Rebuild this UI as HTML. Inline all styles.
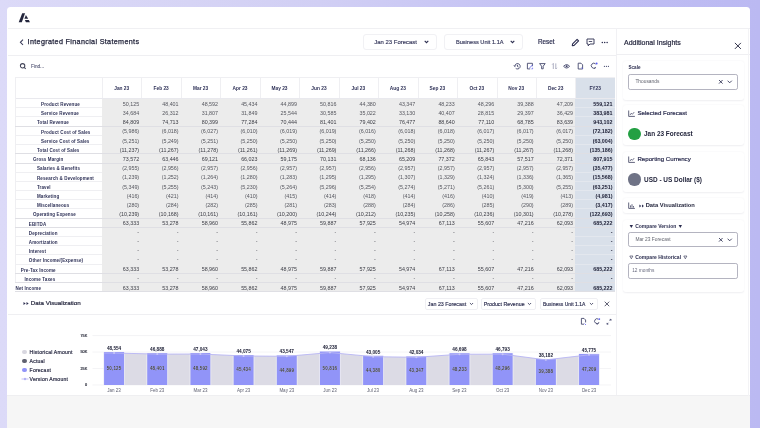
<!DOCTYPE html><html><head><meta charset="utf-8"><style>
*{box-sizing:border-box;margin:0;padding:0}
html,body{width:760px;height:428px;overflow:hidden}
body{font-family:"Liberation Sans",sans-serif;background:linear-gradient(90deg,#dcdaf8 0%,#d6d4f5 25%,#d1cff4 42%,#c7c5f4 63%,#c0bef3 79%,#bbb9f2 100%);position:relative;color:#2b2d4f}
.abs{position:absolute}
.wrap{position:absolute;left:0;top:0;width:760px;height:428px;will-change:transform}
.card{position:absolute;left:7.2px;top:6.8px;width:742.8px;height:440px;background:#fff;border-radius:3.5px;overflow:hidden}
.t{position:absolute;white-space:nowrap;line-height:1}
.hl{position:absolute;height:1px;background:#efeff2}
.vl{position:absolute;width:1px;background:#efeff2}
.lbl{position:absolute;white-space:nowrap;font-weight:bold;font-size:4.5px;letter-spacing:0.12px;color:#2e3157;line-height:1}
.num{position:absolute;white-space:nowrap;font-size:5.35px;color:#55565e;line-height:1;text-align:right}
.mh{position:absolute;white-space:nowrap;font-weight:bold;font-size:4.8px;color:#2e3157;line-height:1;text-align:center}
</style></head><body><div class="wrap"><div class="card"></div>
<svg class="abs" style="left:0;top:0" width="760" height="428"><g fill="#23253c"><polygon points="18.7,22.2 21.8,22.2 25.1,13.3 22.2,13.3"/><polygon points="25.9,15.0 28.2,18.8 24.4,18.8"/><polygon points="24.9,20.0 28.9,20.0 29.9,22.2 25.9,22.2"/></g></svg>
<div class="hl" style="left:8px;top:28px;width:742px;background:#f0f0f3"></div>
<svg class="abs" style="left:18.6px;top:39px" width="6" height="7"><polyline points="4,0.7 1.4,3.3 4,5.9" fill="none" stroke="#3a3c5a" stroke-width="1.05"/></svg>
<div class="t" style="left:27.6px;top:38.3px;font-size:7.2px;letter-spacing:0.33px;-webkit-text-stroke:0.25px #24263d;color:#24263d">Integrated Financial Statements</div>
<div class="abs" style="left:362.5px;top:34.2px;width:74.5px;height:15.5px;border:1px solid #f1f1f4;border-radius:3px"></div>
<div class="t" style="left:374.3px;top:39.775px;font-size:5.95px;color:#34365a;-webkit-text-stroke:0.15px #34365a">Jan 23 Forecast</div>
<svg class="abs" style="left:423.9px;top:40.35px" width="5" height="4"><polyline points="0.7,0.9 2.5,2.7 4.3,0.9" fill="none" stroke="#2b2d4f" stroke-width="1.1"/></svg>
<div class="abs" style="left:443.5px;top:34.2px;width:79.89999999999998px;height:15.5px;border:1px solid #f1f1f4;border-radius:3px"></div>
<div class="t" style="left:455.9px;top:39.925px;font-size:5.65px;color:#34365a;-webkit-text-stroke:0.15px #34365a">Business Unit 1.1A</div>
<svg class="abs" style="left:509.5px;top:40.35px" width="5" height="4"><polyline points="0.7,0.9 2.5,2.7 4.3,0.9" fill="none" stroke="#2b2d4f" stroke-width="1.1"/></svg>
<div class="t" style="left:538px;top:38.8px;font-size:6.35px;color:#2b2d4f;-webkit-text-stroke:0.2px #2b2d4f">Reset</div>
<svg class="abs" style="left:571px;top:38px" width="9" height="9"><path d="M1.3,7.7 L1.6,5.9 L6.1,1.4 L7.6,2.9 L3.1,7.4 Z" fill="none" stroke="#2b2d4f" stroke-width="1.1" stroke-linejoin="round"/></svg>
<svg class="abs" style="left:585.5px;top:38px" width="9" height="9"><path d="M1,1 H8 V6 H4 L2.2,7.8 V6 H1 Z" fill="none" stroke="#2b2d4f" stroke-width="0.9"/><line x1="2.8" y1="3.5" x2="6.2" y2="3.5" stroke="#2b2d4f" stroke-width="0.8"/></svg>
<svg class="abs" style="left:601px;top:40px" width="8" height="5"><g fill="#2b2d4f"><circle cx="1.3" cy="2.5" r="0.75"/><circle cx="3.7" cy="2.5" r="0.75"/><circle cx="6.1" cy="2.5" r="0.75"/></g></svg>
<div class="hl" style="left:8px;top:55px;width:608px"></div>
<svg class="abs" style="left:19px;top:62px" width="8" height="8"><circle cx="3.6" cy="3.8" r="2.2" fill="none" stroke="#44465a" stroke-width="1.05"/><line x1="5.2" y1="5.4" x2="6.7" y2="6.9" stroke="#44465a" stroke-width="1.05"/></svg>
<div class="t" style="left:31px;top:64.8px;font-size:4.7px;color:#5c5e7c;-webkit-text-stroke:0.12px #5c5e7c">Find...</div>
<svg class="abs" style="left:510px;top:60px" width="105" height="12"><g fill="none" stroke="#3b3e66" stroke-width="0.85">
<path d="M4.8,6.3 A2.7,2.7 0 1 1 5.7,8.3"/><path d="M3.9,5.4 L4.8,6.5 L5.8,5.5"/><path d="M7.5,4.9 V6.5 L8.6,7.1"/>
<path d="M17.4,3.3 H22.4 V6.2 M17.4,3.3 V8.9 H20.2"/><path d="M19.6,7.9 L22.6,4.9" stroke="#5a5cf0"/><path d="M21.4,8.9 H22.6 V7.7" stroke="#5a5cf0" stroke-width="0.7"/>
<path d="M29.6,3.6 H35.2 L33.2,6.2 V8.8 H31.6 V6.2 Z"/>
<path d="M43.3,3.4 V9 M42.2,4.6 L43.3,3.4 M45.8,3.4 V9 L46.9,7.8" stroke="#a0a2b8"/>
<path d="M53.6,6.3 Q56.6,2.9 59.6,6.3 Q56.6,9.7 53.6,6.3 Z"/><circle cx="56.6" cy="6.3" r="1" fill="#3b3e66" stroke="none"/>
<path d="M68.2,3.2 H71 L72.6,4.8 V9 H68.2 Z"/><path d="M71.5,7.6 L72.8,8.9" stroke="#5a5cf0"/>
<path d="M85.6,4.0 A2.5,2.5 0 1 0 85.6,7.4 L84.4,9.0"/><circle cx="86.6" cy="3.6" r="1.0" fill="#5a5cf0" stroke="none"/>
</g><g fill="#3b3e66"><circle cx="94.4" cy="6.3" r="0.6"/><circle cx="96.4" cy="6.3" r="0.6"/><circle cx="98.4" cy="6.3" r="0.6"/></g></svg>
<div class="abs" style="left:102.0px;top:98.4px;width:473.40000000000003px;height:193.2px;background:#ececec"></div>
<div class="abs" style="left:575.4000000000001px;top:77.4px;width:39.45px;height:214.2px;background:#d9e0ea"></div>
<div class="hl" style="left:15.0px;top:77.4px;width:599.85px"></div>
<div class="hl" style="left:15.0px;top:98.4px;width:599.85px;background:#e9e9ee"></div>
<div class="vl" style="left:15.0px;top:77.4px;height:205.00000000000003px"></div>
<div class="vl" style="left:102.0px;top:77.4px;height:21.0px"></div>
<div class="vl" style="left:141.45px;top:77.4px;height:21.0px"></div>
<div class="vl" style="left:180.90px;top:77.4px;height:21.0px"></div>
<div class="vl" style="left:220.35px;top:77.4px;height:21.0px"></div>
<div class="vl" style="left:259.80px;top:77.4px;height:21.0px"></div>
<div class="vl" style="left:299.25px;top:77.4px;height:21.0px"></div>
<div class="vl" style="left:338.70px;top:77.4px;height:21.0px"></div>
<div class="vl" style="left:378.15px;top:77.4px;height:21.0px"></div>
<div class="vl" style="left:417.60px;top:77.4px;height:21.0px"></div>
<div class="vl" style="left:457.05px;top:77.4px;height:21.0px"></div>
<div class="vl" style="left:496.50px;top:77.4px;height:21.0px"></div>
<div class="vl" style="left:535.95px;top:77.4px;height:21.0px"></div>
<div class="vl" style="left:575.40px;top:77.4px;height:21.0px"></div>
<div class="mh" style="left:102.00px;top:87.00px;width:39.45px">Jan 23</div>
<div class="mh" style="left:141.45px;top:87.00px;width:39.45px">Feb 23</div>
<div class="mh" style="left:180.90px;top:87.00px;width:39.45px">Mar 23</div>
<div class="mh" style="left:220.35px;top:87.00px;width:39.45px">Apr 23</div>
<div class="mh" style="left:259.80px;top:87.00px;width:39.45px">May 23</div>
<div class="mh" style="left:299.25px;top:87.00px;width:39.45px">Jun 23</div>
<div class="mh" style="left:338.70px;top:87.00px;width:39.45px">Jul 23</div>
<div class="mh" style="left:378.15px;top:87.00px;width:39.45px">Aug 23</div>
<div class="mh" style="left:417.60px;top:87.00px;width:39.45px">Sep 23</div>
<div class="mh" style="left:457.05px;top:87.00px;width:39.45px">Oct 23</div>
<div class="mh" style="left:496.50px;top:87.00px;width:39.45px">Nov 23</div>
<div class="mh" style="left:535.95px;top:87.00px;width:39.45px">Dec 23</div>
<div class="mh" style="left:575.40px;top:87.00px;width:39.45px">FY23</div>
<div class="hl" style="left:15.0px;top:107.10px;width:87.0px;background:#efeff2"></div>
<div class="hl" style="left:575.40px;top:107.10px;width:39.45px;background:#e3e7ee"></div>
<div class="lbl" style="left:41.1px;top:102.90px">Product Revenue</div>
<div class="num" style="left:102.00px;top:101.70px;width:37.150000000000006px;">50,125</div>
<div class="num" style="left:141.45px;top:101.70px;width:37.150000000000006px;">48,401</div>
<div class="num" style="left:180.90px;top:101.70px;width:37.150000000000006px;">48,592</div>
<div class="num" style="left:220.35px;top:101.70px;width:37.150000000000006px;">45,434</div>
<div class="num" style="left:259.80px;top:101.70px;width:37.150000000000006px;">44,899</div>
<div class="num" style="left:299.25px;top:101.70px;width:37.150000000000006px;">50,816</div>
<div class="num" style="left:338.70px;top:101.70px;width:37.150000000000006px;">44,380</div>
<div class="num" style="left:378.15px;top:101.70px;width:37.150000000000006px;">43,347</div>
<div class="num" style="left:417.60px;top:101.70px;width:37.150000000000006px;">48,233</div>
<div class="num" style="left:457.05px;top:101.70px;width:37.150000000000006px;">48,296</div>
<div class="num" style="left:496.50px;top:101.70px;width:37.150000000000006px;">39,388</div>
<div class="num" style="left:535.95px;top:101.70px;width:37.150000000000006px;">47,209</div>
<div class="num" style="left:575.40px;top:101.70px;width:37.150000000000006px;font-weight:bold;color:#22243a;">559,121</div>
<div class="hl" style="left:15.0px;top:116.30px;width:87.0px;background:#efeff2"></div>
<div class="hl" style="left:575.40px;top:116.30px;width:39.45px;background:#e3e7ee"></div>
<div class="lbl" style="left:41.1px;top:112.10px">Service Revenue</div>
<div class="num" style="left:102.00px;top:110.90px;width:37.150000000000006px;">34,684</div>
<div class="num" style="left:141.45px;top:110.90px;width:37.150000000000006px;">26,312</div>
<div class="num" style="left:180.90px;top:110.90px;width:37.150000000000006px;">31,807</div>
<div class="num" style="left:220.35px;top:110.90px;width:37.150000000000006px;">31,849</div>
<div class="num" style="left:259.80px;top:110.90px;width:37.150000000000006px;">25,544</div>
<div class="num" style="left:299.25px;top:110.90px;width:37.150000000000006px;">30,585</div>
<div class="num" style="left:338.70px;top:110.90px;width:37.150000000000006px;">35,022</div>
<div class="num" style="left:378.15px;top:110.90px;width:37.150000000000006px;">33,130</div>
<div class="num" style="left:417.60px;top:110.90px;width:37.150000000000006px;">40,407</div>
<div class="num" style="left:457.05px;top:110.90px;width:37.150000000000006px;">28,815</div>
<div class="num" style="left:496.50px;top:110.90px;width:37.150000000000006px;">29,397</div>
<div class="num" style="left:535.95px;top:110.90px;width:37.150000000000006px;">36,429</div>
<div class="num" style="left:575.40px;top:110.90px;width:37.150000000000006px;font-weight:bold;color:#22243a;">383,981</div>
<div class="hl" style="left:15.0px;top:125.80px;width:599.85px;background:#dfdfe4"></div>
<div class="lbl" style="left:37.0px;top:121.30px">Total Revenue</div>
<div class="num" style="left:102.00px;top:120.10px;width:37.150000000000006px;color:#3a3b44;">84,809</div>
<div class="num" style="left:141.45px;top:120.10px;width:37.150000000000006px;color:#3a3b44;">74,713</div>
<div class="num" style="left:180.90px;top:120.10px;width:37.150000000000006px;color:#3a3b44;">80,399</div>
<div class="num" style="left:220.35px;top:120.10px;width:37.150000000000006px;color:#3a3b44;">77,284</div>
<div class="num" style="left:259.80px;top:120.10px;width:37.150000000000006px;color:#3a3b44;">70,444</div>
<div class="num" style="left:299.25px;top:120.10px;width:37.150000000000006px;color:#3a3b44;">81,401</div>
<div class="num" style="left:338.70px;top:120.10px;width:37.150000000000006px;color:#3a3b44;">79,402</div>
<div class="num" style="left:378.15px;top:120.10px;width:37.150000000000006px;color:#3a3b44;">76,477</div>
<div class="num" style="left:417.60px;top:120.10px;width:37.150000000000006px;color:#3a3b44;">88,640</div>
<div class="num" style="left:457.05px;top:120.10px;width:37.150000000000006px;color:#3a3b44;">77,110</div>
<div class="num" style="left:496.50px;top:120.10px;width:37.150000000000006px;color:#3a3b44;">68,785</div>
<div class="num" style="left:535.95px;top:120.10px;width:37.150000000000006px;color:#3a3b44;">83,639</div>
<div class="num" style="left:575.40px;top:120.10px;width:37.150000000000006px;font-weight:bold;color:#22243a;">943,102</div>
<div class="hl" style="left:15.0px;top:134.70px;width:87.0px;background:#efeff2"></div>
<div class="hl" style="left:575.40px;top:134.70px;width:39.45px;background:#e3e7ee"></div>
<div class="lbl" style="left:41.1px;top:130.50px">Product Cost of Sales</div>
<div class="num" style="left:102.00px;top:129.30px;width:37.150000000000006px;">(5,986)</div>
<div class="num" style="left:141.45px;top:129.30px;width:37.150000000000006px;">(6,018)</div>
<div class="num" style="left:180.90px;top:129.30px;width:37.150000000000006px;">(6,027)</div>
<div class="num" style="left:220.35px;top:129.30px;width:37.150000000000006px;">(6,010)</div>
<div class="num" style="left:259.80px;top:129.30px;width:37.150000000000006px;">(6,019)</div>
<div class="num" style="left:299.25px;top:129.30px;width:37.150000000000006px;">(6,019)</div>
<div class="num" style="left:338.70px;top:129.30px;width:37.150000000000006px;">(6,016)</div>
<div class="num" style="left:378.15px;top:129.30px;width:37.150000000000006px;">(6,018)</div>
<div class="num" style="left:417.60px;top:129.30px;width:37.150000000000006px;">(6,018)</div>
<div class="num" style="left:457.05px;top:129.30px;width:37.150000000000006px;">(6,017)</div>
<div class="num" style="left:496.50px;top:129.30px;width:37.150000000000006px;">(6,017)</div>
<div class="num" style="left:535.95px;top:129.30px;width:37.150000000000006px;">(6,017)</div>
<div class="num" style="left:575.40px;top:129.30px;width:37.150000000000006px;font-weight:bold;color:#22243a;">(72,182)</div>
<div class="hl" style="left:15.0px;top:143.90px;width:87.0px;background:#efeff2"></div>
<div class="hl" style="left:575.40px;top:143.90px;width:39.45px;background:#e3e7ee"></div>
<div class="lbl" style="left:41.1px;top:139.70px">Service Cost of Sales</div>
<div class="num" style="left:102.00px;top:138.50px;width:37.150000000000006px;">(5,251)</div>
<div class="num" style="left:141.45px;top:138.50px;width:37.150000000000006px;">(5,249)</div>
<div class="num" style="left:180.90px;top:138.50px;width:37.150000000000006px;">(5,251)</div>
<div class="num" style="left:220.35px;top:138.50px;width:37.150000000000006px;">(5,250)</div>
<div class="num" style="left:259.80px;top:138.50px;width:37.150000000000006px;">(5,250)</div>
<div class="num" style="left:299.25px;top:138.50px;width:37.150000000000006px;">(5,250)</div>
<div class="num" style="left:338.70px;top:138.50px;width:37.150000000000006px;">(5,250)</div>
<div class="num" style="left:378.15px;top:138.50px;width:37.150000000000006px;">(5,250)</div>
<div class="num" style="left:417.60px;top:138.50px;width:37.150000000000006px;">(5,250)</div>
<div class="num" style="left:457.05px;top:138.50px;width:37.150000000000006px;">(5,250)</div>
<div class="num" style="left:496.50px;top:138.50px;width:37.150000000000006px;">(5,250)</div>
<div class="num" style="left:535.95px;top:138.50px;width:37.150000000000006px;">(5,250)</div>
<div class="num" style="left:575.40px;top:138.50px;width:37.150000000000006px;font-weight:bold;color:#22243a;">(63,004)</div>
<div class="hl" style="left:15.0px;top:153.40px;width:599.85px;background:#dfdfe4"></div>
<div class="lbl" style="left:37.0px;top:148.90px">Total Cost of Sales</div>
<div class="num" style="left:102.00px;top:147.70px;width:37.150000000000006px;color:#3a3b44;">(11,237)</div>
<div class="num" style="left:141.45px;top:147.70px;width:37.150000000000006px;color:#3a3b44;">(11,267)</div>
<div class="num" style="left:180.90px;top:147.70px;width:37.150000000000006px;color:#3a3b44;">(11,278)</div>
<div class="num" style="left:220.35px;top:147.70px;width:37.150000000000006px;color:#3a3b44;">(11,261)</div>
<div class="num" style="left:259.80px;top:147.70px;width:37.150000000000006px;color:#3a3b44;">(11,269)</div>
<div class="num" style="left:299.25px;top:147.70px;width:37.150000000000006px;color:#3a3b44;">(11,269)</div>
<div class="num" style="left:338.70px;top:147.70px;width:37.150000000000006px;color:#3a3b44;">(11,266)</div>
<div class="num" style="left:378.15px;top:147.70px;width:37.150000000000006px;color:#3a3b44;">(11,268)</div>
<div class="num" style="left:417.60px;top:147.70px;width:37.150000000000006px;color:#3a3b44;">(11,268)</div>
<div class="num" style="left:457.05px;top:147.70px;width:37.150000000000006px;color:#3a3b44;">(11,267)</div>
<div class="num" style="left:496.50px;top:147.70px;width:37.150000000000006px;color:#3a3b44;">(11,267)</div>
<div class="num" style="left:535.95px;top:147.70px;width:37.150000000000006px;color:#3a3b44;">(11,268)</div>
<div class="num" style="left:575.40px;top:147.70px;width:37.150000000000006px;font-weight:bold;color:#22243a;">(135,186)</div>
<div class="hl" style="left:15.0px;top:162.60px;width:599.85px;background:#dfdfe4"></div>
<div class="lbl" style="left:32.9px;top:158.10px">Gross Margin</div>
<div class="num" style="left:102.00px;top:156.90px;width:37.150000000000006px;color:#3a3b44;">73,572</div>
<div class="num" style="left:141.45px;top:156.90px;width:37.150000000000006px;color:#3a3b44;">63,446</div>
<div class="num" style="left:180.90px;top:156.90px;width:37.150000000000006px;color:#3a3b44;">69,121</div>
<div class="num" style="left:220.35px;top:156.90px;width:37.150000000000006px;color:#3a3b44;">66,023</div>
<div class="num" style="left:259.80px;top:156.90px;width:37.150000000000006px;color:#3a3b44;">59,175</div>
<div class="num" style="left:299.25px;top:156.90px;width:37.150000000000006px;color:#3a3b44;">70,131</div>
<div class="num" style="left:338.70px;top:156.90px;width:37.150000000000006px;color:#3a3b44;">68,136</div>
<div class="num" style="left:378.15px;top:156.90px;width:37.150000000000006px;color:#3a3b44;">65,209</div>
<div class="num" style="left:417.60px;top:156.90px;width:37.150000000000006px;color:#3a3b44;">77,372</div>
<div class="num" style="left:457.05px;top:156.90px;width:37.150000000000006px;color:#3a3b44;">65,843</div>
<div class="num" style="left:496.50px;top:156.90px;width:37.150000000000006px;color:#3a3b44;">57,517</div>
<div class="num" style="left:535.95px;top:156.90px;width:37.150000000000006px;color:#3a3b44;">72,371</div>
<div class="num" style="left:575.40px;top:156.90px;width:37.150000000000006px;font-weight:bold;color:#22243a;">807,915</div>
<div class="hl" style="left:15.0px;top:171.50px;width:87.0px;background:#efeff2"></div>
<div class="hl" style="left:575.40px;top:171.50px;width:39.45px;background:#e3e7ee"></div>
<div class="lbl" style="left:37.0px;top:167.30px">Salaries &amp; Benefits</div>
<div class="num" style="left:102.00px;top:166.10px;width:37.150000000000006px;">(2,955)</div>
<div class="num" style="left:141.45px;top:166.10px;width:37.150000000000006px;">(2,956)</div>
<div class="num" style="left:180.90px;top:166.10px;width:37.150000000000006px;">(2,957)</div>
<div class="num" style="left:220.35px;top:166.10px;width:37.150000000000006px;">(2,956)</div>
<div class="num" style="left:259.80px;top:166.10px;width:37.150000000000006px;">(2,957)</div>
<div class="num" style="left:299.25px;top:166.10px;width:37.150000000000006px;">(2,957)</div>
<div class="num" style="left:338.70px;top:166.10px;width:37.150000000000006px;">(2,956)</div>
<div class="num" style="left:378.15px;top:166.10px;width:37.150000000000006px;">(2,957)</div>
<div class="num" style="left:417.60px;top:166.10px;width:37.150000000000006px;">(2,957)</div>
<div class="num" style="left:457.05px;top:166.10px;width:37.150000000000006px;">(2,957)</div>
<div class="num" style="left:496.50px;top:166.10px;width:37.150000000000006px;">(2,957)</div>
<div class="num" style="left:535.95px;top:166.10px;width:37.150000000000006px;">(2,957)</div>
<div class="num" style="left:575.40px;top:166.10px;width:37.150000000000006px;font-weight:bold;color:#22243a;">(35,477)</div>
<div class="hl" style="left:15.0px;top:180.70px;width:87.0px;background:#efeff2"></div>
<div class="hl" style="left:575.40px;top:180.70px;width:39.45px;background:#e3e7ee"></div>
<div class="lbl" style="left:37.0px;top:176.50px">Research &amp; Development</div>
<div class="num" style="left:102.00px;top:175.30px;width:37.150000000000006px;">(1,239)</div>
<div class="num" style="left:141.45px;top:175.30px;width:37.150000000000006px;">(1,252)</div>
<div class="num" style="left:180.90px;top:175.30px;width:37.150000000000006px;">(1,264)</div>
<div class="num" style="left:220.35px;top:175.30px;width:37.150000000000006px;">(1,280)</div>
<div class="num" style="left:259.80px;top:175.30px;width:37.150000000000006px;">(1,283)</div>
<div class="num" style="left:299.25px;top:175.30px;width:37.150000000000006px;">(1,295)</div>
<div class="num" style="left:338.70px;top:175.30px;width:37.150000000000006px;">(1,295)</div>
<div class="num" style="left:378.15px;top:175.30px;width:37.150000000000006px;">(1,307)</div>
<div class="num" style="left:417.60px;top:175.30px;width:37.150000000000006px;">(1,329)</div>
<div class="num" style="left:457.05px;top:175.30px;width:37.150000000000006px;">(1,324)</div>
<div class="num" style="left:496.50px;top:175.30px;width:37.150000000000006px;">(1,336)</div>
<div class="num" style="left:535.95px;top:175.30px;width:37.150000000000006px;">(1,365)</div>
<div class="num" style="left:575.40px;top:175.30px;width:37.150000000000006px;font-weight:bold;color:#22243a;">(15,568)</div>
<div class="hl" style="left:15.0px;top:189.90px;width:87.0px;background:#efeff2"></div>
<div class="hl" style="left:575.40px;top:189.90px;width:39.45px;background:#e3e7ee"></div>
<div class="lbl" style="left:37.0px;top:185.70px">Travel</div>
<div class="num" style="left:102.00px;top:184.50px;width:37.150000000000006px;">(5,349)</div>
<div class="num" style="left:141.45px;top:184.50px;width:37.150000000000006px;">(5,255)</div>
<div class="num" style="left:180.90px;top:184.50px;width:37.150000000000006px;">(5,243)</div>
<div class="num" style="left:220.35px;top:184.50px;width:37.150000000000006px;">(5,230)</div>
<div class="num" style="left:259.80px;top:184.50px;width:37.150000000000006px;">(5,264)</div>
<div class="num" style="left:299.25px;top:184.50px;width:37.150000000000006px;">(5,296)</div>
<div class="num" style="left:338.70px;top:184.50px;width:37.150000000000006px;">(5,254)</div>
<div class="num" style="left:378.15px;top:184.50px;width:37.150000000000006px;">(5,274)</div>
<div class="num" style="left:417.60px;top:184.50px;width:37.150000000000006px;">(5,271)</div>
<div class="num" style="left:457.05px;top:184.50px;width:37.150000000000006px;">(5,261)</div>
<div class="num" style="left:496.50px;top:184.50px;width:37.150000000000006px;">(5,300)</div>
<div class="num" style="left:535.95px;top:184.50px;width:37.150000000000006px;">(5,255)</div>
<div class="num" style="left:575.40px;top:184.50px;width:37.150000000000006px;font-weight:bold;color:#22243a;">(63,251)</div>
<div class="hl" style="left:15.0px;top:199.10px;width:87.0px;background:#efeff2"></div>
<div class="hl" style="left:575.40px;top:199.10px;width:39.45px;background:#e3e7ee"></div>
<div class="lbl" style="left:37.0px;top:194.90px">Marketing</div>
<div class="num" style="left:102.00px;top:193.70px;width:37.150000000000006px;">(416)</div>
<div class="num" style="left:141.45px;top:193.70px;width:37.150000000000006px;">(421)</div>
<div class="num" style="left:180.90px;top:193.70px;width:37.150000000000006px;">(414)</div>
<div class="num" style="left:220.35px;top:193.70px;width:37.150000000000006px;">(410)</div>
<div class="num" style="left:259.80px;top:193.70px;width:37.150000000000006px;">(415)</div>
<div class="num" style="left:299.25px;top:193.70px;width:37.150000000000006px;">(414)</div>
<div class="num" style="left:338.70px;top:193.70px;width:37.150000000000006px;">(418)</div>
<div class="num" style="left:378.15px;top:193.70px;width:37.150000000000006px;">(414)</div>
<div class="num" style="left:417.60px;top:193.70px;width:37.150000000000006px;">(416)</div>
<div class="num" style="left:457.05px;top:193.70px;width:37.150000000000006px;">(410)</div>
<div class="num" style="left:496.50px;top:193.70px;width:37.150000000000006px;">(419)</div>
<div class="num" style="left:535.95px;top:193.70px;width:37.150000000000006px;">(413)</div>
<div class="num" style="left:575.40px;top:193.70px;width:37.150000000000006px;font-weight:bold;color:#22243a;">(4,981)</div>
<div class="hl" style="left:15.0px;top:208.30px;width:87.0px;background:#efeff2"></div>
<div class="hl" style="left:575.40px;top:208.30px;width:39.45px;background:#e3e7ee"></div>
<div class="lbl" style="left:37.0px;top:204.10px">Miscellaneous</div>
<div class="num" style="left:102.00px;top:202.90px;width:37.150000000000006px;">(280)</div>
<div class="num" style="left:141.45px;top:202.90px;width:37.150000000000006px;">(284)</div>
<div class="num" style="left:180.90px;top:202.90px;width:37.150000000000006px;">(282)</div>
<div class="num" style="left:220.35px;top:202.90px;width:37.150000000000006px;">(285)</div>
<div class="num" style="left:259.80px;top:202.90px;width:37.150000000000006px;">(281)</div>
<div class="num" style="left:299.25px;top:202.90px;width:37.150000000000006px;">(283)</div>
<div class="num" style="left:338.70px;top:202.90px;width:37.150000000000006px;">(288)</div>
<div class="num" style="left:378.15px;top:202.90px;width:37.150000000000006px;">(284)</div>
<div class="num" style="left:417.60px;top:202.90px;width:37.150000000000006px;">(286)</div>
<div class="num" style="left:457.05px;top:202.90px;width:37.150000000000006px;">(285)</div>
<div class="num" style="left:496.50px;top:202.90px;width:37.150000000000006px;">(290)</div>
<div class="num" style="left:535.95px;top:202.90px;width:37.150000000000006px;">(289)</div>
<div class="num" style="left:575.40px;top:202.90px;width:37.150000000000006px;font-weight:bold;color:#22243a;">(3,417)</div>
<div class="hl" style="left:15.0px;top:217.80px;width:599.85px;background:#dfdfe4"></div>
<div class="lbl" style="left:32.9px;top:213.30px">Operating Expense</div>
<div class="num" style="left:102.00px;top:212.10px;width:37.150000000000006px;color:#3a3b44;">(10,239)</div>
<div class="num" style="left:141.45px;top:212.10px;width:37.150000000000006px;color:#3a3b44;">(10,168)</div>
<div class="num" style="left:180.90px;top:212.10px;width:37.150000000000006px;color:#3a3b44;">(10,161)</div>
<div class="num" style="left:220.35px;top:212.10px;width:37.150000000000006px;color:#3a3b44;">(10,161)</div>
<div class="num" style="left:259.80px;top:212.10px;width:37.150000000000006px;color:#3a3b44;">(10,200)</div>
<div class="num" style="left:299.25px;top:212.10px;width:37.150000000000006px;color:#3a3b44;">(10,244)</div>
<div class="num" style="left:338.70px;top:212.10px;width:37.150000000000006px;color:#3a3b44;">(10,212)</div>
<div class="num" style="left:378.15px;top:212.10px;width:37.150000000000006px;color:#3a3b44;">(10,235)</div>
<div class="num" style="left:417.60px;top:212.10px;width:37.150000000000006px;color:#3a3b44;">(10,258)</div>
<div class="num" style="left:457.05px;top:212.10px;width:37.150000000000006px;color:#3a3b44;">(10,236)</div>
<div class="num" style="left:496.50px;top:212.10px;width:37.150000000000006px;color:#3a3b44;">(10,301)</div>
<div class="num" style="left:535.95px;top:212.10px;width:37.150000000000006px;color:#3a3b44;">(10,278)</div>
<div class="num" style="left:575.40px;top:212.10px;width:37.150000000000006px;font-weight:bold;color:#22243a;">(122,693)</div>
<div class="hl" style="left:15.0px;top:227.00px;width:599.85px;background:#dfdfe4"></div>
<div class="lbl" style="left:28.8px;top:222.50px">EBITDA</div>
<div class="num" style="left:102.00px;top:221.30px;width:37.150000000000006px;color:#3a3b44;">63,333</div>
<div class="num" style="left:141.45px;top:221.30px;width:37.150000000000006px;color:#3a3b44;">53,278</div>
<div class="num" style="left:180.90px;top:221.30px;width:37.150000000000006px;color:#3a3b44;">58,960</div>
<div class="num" style="left:220.35px;top:221.30px;width:37.150000000000006px;color:#3a3b44;">55,862</div>
<div class="num" style="left:259.80px;top:221.30px;width:37.150000000000006px;color:#3a3b44;">48,975</div>
<div class="num" style="left:299.25px;top:221.30px;width:37.150000000000006px;color:#3a3b44;">59,887</div>
<div class="num" style="left:338.70px;top:221.30px;width:37.150000000000006px;color:#3a3b44;">57,925</div>
<div class="num" style="left:378.15px;top:221.30px;width:37.150000000000006px;color:#3a3b44;">54,974</div>
<div class="num" style="left:417.60px;top:221.30px;width:37.150000000000006px;color:#3a3b44;">67,113</div>
<div class="num" style="left:457.05px;top:221.30px;width:37.150000000000006px;color:#3a3b44;">55,607</div>
<div class="num" style="left:496.50px;top:221.30px;width:37.150000000000006px;color:#3a3b44;">47,216</div>
<div class="num" style="left:535.95px;top:221.30px;width:37.150000000000006px;color:#3a3b44;">62,093</div>
<div class="num" style="left:575.40px;top:221.30px;width:37.150000000000006px;font-weight:bold;color:#22243a;">685,222</div>
<div class="hl" style="left:15.0px;top:235.90px;width:87.0px;background:#efeff2"></div>
<div class="hl" style="left:575.40px;top:235.90px;width:39.45px;background:#e3e7ee"></div>
<div class="lbl" style="left:28.8px;top:231.70px">Depreciation</div>
<div class="num" style="left:102.00px;top:229.60px;width:37.150000000000006px;">-</div>
<div class="num" style="left:141.45px;top:229.60px;width:37.150000000000006px;">-</div>
<div class="num" style="left:180.90px;top:229.60px;width:37.150000000000006px;">-</div>
<div class="num" style="left:220.35px;top:229.60px;width:37.150000000000006px;">-</div>
<div class="num" style="left:259.80px;top:229.60px;width:37.150000000000006px;">-</div>
<div class="num" style="left:299.25px;top:229.60px;width:37.150000000000006px;">-</div>
<div class="num" style="left:338.70px;top:229.60px;width:37.150000000000006px;">-</div>
<div class="num" style="left:378.15px;top:229.60px;width:37.150000000000006px;">-</div>
<div class="num" style="left:417.60px;top:229.60px;width:37.150000000000006px;">-</div>
<div class="num" style="left:457.05px;top:229.60px;width:37.150000000000006px;">-</div>
<div class="num" style="left:496.50px;top:229.60px;width:37.150000000000006px;">-</div>
<div class="num" style="left:535.95px;top:229.60px;width:37.150000000000006px;">-</div>
<div class="num" style="left:575.40px;top:229.60px;width:37.150000000000006px;font-weight:bold;color:#22243a;">-</div>
<div class="hl" style="left:15.0px;top:245.10px;width:87.0px;background:#efeff2"></div>
<div class="hl" style="left:575.40px;top:245.10px;width:39.45px;background:#e3e7ee"></div>
<div class="lbl" style="left:28.8px;top:240.90px">Amortization</div>
<div class="num" style="left:102.00px;top:238.80px;width:37.150000000000006px;">-</div>
<div class="num" style="left:141.45px;top:238.80px;width:37.150000000000006px;">-</div>
<div class="num" style="left:180.90px;top:238.80px;width:37.150000000000006px;">-</div>
<div class="num" style="left:220.35px;top:238.80px;width:37.150000000000006px;">-</div>
<div class="num" style="left:259.80px;top:238.80px;width:37.150000000000006px;">-</div>
<div class="num" style="left:299.25px;top:238.80px;width:37.150000000000006px;">-</div>
<div class="num" style="left:338.70px;top:238.80px;width:37.150000000000006px;">-</div>
<div class="num" style="left:378.15px;top:238.80px;width:37.150000000000006px;">-</div>
<div class="num" style="left:417.60px;top:238.80px;width:37.150000000000006px;">-</div>
<div class="num" style="left:457.05px;top:238.80px;width:37.150000000000006px;">-</div>
<div class="num" style="left:496.50px;top:238.80px;width:37.150000000000006px;">-</div>
<div class="num" style="left:535.95px;top:238.80px;width:37.150000000000006px;">-</div>
<div class="num" style="left:575.40px;top:238.80px;width:37.150000000000006px;font-weight:bold;color:#22243a;">-</div>
<div class="hl" style="left:15.0px;top:254.30px;width:87.0px;background:#efeff2"></div>
<div class="hl" style="left:575.40px;top:254.30px;width:39.45px;background:#e3e7ee"></div>
<div class="lbl" style="left:28.8px;top:250.10px">Interest</div>
<div class="num" style="left:102.00px;top:248.00px;width:37.150000000000006px;">-</div>
<div class="num" style="left:141.45px;top:248.00px;width:37.150000000000006px;">-</div>
<div class="num" style="left:180.90px;top:248.00px;width:37.150000000000006px;">-</div>
<div class="num" style="left:220.35px;top:248.00px;width:37.150000000000006px;">-</div>
<div class="num" style="left:259.80px;top:248.00px;width:37.150000000000006px;">-</div>
<div class="num" style="left:299.25px;top:248.00px;width:37.150000000000006px;">-</div>
<div class="num" style="left:338.70px;top:248.00px;width:37.150000000000006px;">-</div>
<div class="num" style="left:378.15px;top:248.00px;width:37.150000000000006px;">-</div>
<div class="num" style="left:417.60px;top:248.00px;width:37.150000000000006px;">-</div>
<div class="num" style="left:457.05px;top:248.00px;width:37.150000000000006px;">-</div>
<div class="num" style="left:496.50px;top:248.00px;width:37.150000000000006px;">-</div>
<div class="num" style="left:535.95px;top:248.00px;width:37.150000000000006px;">-</div>
<div class="num" style="left:575.40px;top:248.00px;width:37.150000000000006px;font-weight:bold;color:#22243a;">-</div>
<div class="hl" style="left:15.0px;top:263.50px;width:87.0px;background:#efeff2"></div>
<div class="hl" style="left:575.40px;top:263.50px;width:39.45px;background:#e3e7ee"></div>
<div class="lbl" style="left:28.8px;top:259.30px">Other Income/(Expense)</div>
<div class="num" style="left:102.00px;top:257.20px;width:37.150000000000006px;">-</div>
<div class="num" style="left:141.45px;top:257.20px;width:37.150000000000006px;">-</div>
<div class="num" style="left:180.90px;top:257.20px;width:37.150000000000006px;">-</div>
<div class="num" style="left:220.35px;top:257.20px;width:37.150000000000006px;">-</div>
<div class="num" style="left:259.80px;top:257.20px;width:37.150000000000006px;">-</div>
<div class="num" style="left:299.25px;top:257.20px;width:37.150000000000006px;">-</div>
<div class="num" style="left:338.70px;top:257.20px;width:37.150000000000006px;">-</div>
<div class="num" style="left:378.15px;top:257.20px;width:37.150000000000006px;">-</div>
<div class="num" style="left:417.60px;top:257.20px;width:37.150000000000006px;">-</div>
<div class="num" style="left:457.05px;top:257.20px;width:37.150000000000006px;">-</div>
<div class="num" style="left:496.50px;top:257.20px;width:37.150000000000006px;">-</div>
<div class="num" style="left:535.95px;top:257.20px;width:37.150000000000006px;">-</div>
<div class="num" style="left:575.40px;top:257.20px;width:37.150000000000006px;font-weight:bold;color:#22243a;">-</div>
<div class="hl" style="left:15.0px;top:273.00px;width:599.85px;background:#dfdfe4"></div>
<div class="lbl" style="left:20.8px;top:268.50px">Pre-Tax Income</div>
<div class="num" style="left:102.00px;top:267.30px;width:37.150000000000006px;color:#3a3b44;">63,333</div>
<div class="num" style="left:141.45px;top:267.30px;width:37.150000000000006px;color:#3a3b44;">53,278</div>
<div class="num" style="left:180.90px;top:267.30px;width:37.150000000000006px;color:#3a3b44;">58,960</div>
<div class="num" style="left:220.35px;top:267.30px;width:37.150000000000006px;color:#3a3b44;">55,862</div>
<div class="num" style="left:259.80px;top:267.30px;width:37.150000000000006px;color:#3a3b44;">48,975</div>
<div class="num" style="left:299.25px;top:267.30px;width:37.150000000000006px;color:#3a3b44;">59,887</div>
<div class="num" style="left:338.70px;top:267.30px;width:37.150000000000006px;color:#3a3b44;">57,925</div>
<div class="num" style="left:378.15px;top:267.30px;width:37.150000000000006px;color:#3a3b44;">54,974</div>
<div class="num" style="left:417.60px;top:267.30px;width:37.150000000000006px;color:#3a3b44;">67,113</div>
<div class="num" style="left:457.05px;top:267.30px;width:37.150000000000006px;color:#3a3b44;">55,607</div>
<div class="num" style="left:496.50px;top:267.30px;width:37.150000000000006px;color:#3a3b44;">47,216</div>
<div class="num" style="left:535.95px;top:267.30px;width:37.150000000000006px;color:#3a3b44;">62,093</div>
<div class="num" style="left:575.40px;top:267.30px;width:37.150000000000006px;font-weight:bold;color:#22243a;">685,222</div>
<div class="hl" style="left:15.0px;top:282.20px;width:599.85px;background:#dfdfe4"></div>
<div class="lbl" style="left:24.4px;top:277.70px">Income Taxes</div>
<div class="num" style="left:102.00px;top:275.60px;width:37.150000000000006px;">-</div>
<div class="num" style="left:141.45px;top:275.60px;width:37.150000000000006px;">-</div>
<div class="num" style="left:180.90px;top:275.60px;width:37.150000000000006px;">-</div>
<div class="num" style="left:220.35px;top:275.60px;width:37.150000000000006px;">-</div>
<div class="num" style="left:259.80px;top:275.60px;width:37.150000000000006px;">-</div>
<div class="num" style="left:299.25px;top:275.60px;width:37.150000000000006px;">-</div>
<div class="num" style="left:338.70px;top:275.60px;width:37.150000000000006px;">-</div>
<div class="num" style="left:378.15px;top:275.60px;width:37.150000000000006px;">-</div>
<div class="num" style="left:417.60px;top:275.60px;width:37.150000000000006px;">-</div>
<div class="num" style="left:457.05px;top:275.60px;width:37.150000000000006px;">-</div>
<div class="num" style="left:496.50px;top:275.60px;width:37.150000000000006px;">-</div>
<div class="num" style="left:535.95px;top:275.60px;width:37.150000000000006px;">-</div>
<div class="num" style="left:575.40px;top:275.60px;width:37.150000000000006px;font-weight:bold;color:#22243a;">-</div>
<div class="hl" style="left:15.0px;top:291.40px;width:599.85px;background:#dfdfe4"></div>
<div class="lbl" style="left:15.6px;top:286.90px">Net Income</div>
<div class="num" style="left:102.00px;top:285.70px;width:37.150000000000006px;color:#3a3b44;">63,333</div>
<div class="num" style="left:141.45px;top:285.70px;width:37.150000000000006px;color:#3a3b44;">53,278</div>
<div class="num" style="left:180.90px;top:285.70px;width:37.150000000000006px;color:#3a3b44;">58,960</div>
<div class="num" style="left:220.35px;top:285.70px;width:37.150000000000006px;color:#3a3b44;">55,862</div>
<div class="num" style="left:259.80px;top:285.70px;width:37.150000000000006px;color:#3a3b44;">48,975</div>
<div class="num" style="left:299.25px;top:285.70px;width:37.150000000000006px;color:#3a3b44;">59,887</div>
<div class="num" style="left:338.70px;top:285.70px;width:37.150000000000006px;color:#3a3b44;">57,925</div>
<div class="num" style="left:378.15px;top:285.70px;width:37.150000000000006px;color:#3a3b44;">54,974</div>
<div class="num" style="left:417.60px;top:285.70px;width:37.150000000000006px;color:#3a3b44;">67,113</div>
<div class="num" style="left:457.05px;top:285.70px;width:37.150000000000006px;color:#3a3b44;">55,607</div>
<div class="num" style="left:496.50px;top:285.70px;width:37.150000000000006px;color:#3a3b44;">47,216</div>
<div class="num" style="left:535.95px;top:285.70px;width:37.150000000000006px;color:#3a3b44;">62,093</div>
<div class="num" style="left:575.40px;top:285.70px;width:37.150000000000006px;font-weight:bold;color:#22243a;">685,222</div>
<div class="vl" style="left:615.6px;top:28px;height:368px;background:#f1f1f4"></div>
<svg class="abs" style="left:23.2px;top:301px" width="8" height="6"><g fill="#2b2d4f"><polygon points="0.5,0.9 2.7,2.5 0.5,4.1"/><polygon points="3.5,0.9 5.7,2.5 3.5,4.1"/></g></svg>
<div class="t" style="left:30.8px;top:300.3px;font-size:6.25px;color:#24263d;-webkit-text-stroke:0.2px #24263d">Data Visualization</div>
<div class="hl" style="left:8px;top:314px;width:608px"></div>
<div class="abs" style="left:424.6px;top:298px;width:53.0px;height:11.7px;border:1px solid #efeff3;border-radius:2px"></div>
<div class="t" style="left:427.8px;top:301.625px;font-size:5.35px;color:#2b2d4f;-webkit-text-stroke:0.15px #2b2d4f">Jan 23 Forecast</div>
<svg class="abs" style="left:468.6px;top:302px" width="5" height="4"><polyline points="0.9,1 2.5,2.6 4.1,1" fill="none" stroke="#2b2d4f" stroke-width="0.8"/></svg>
<div class="abs" style="left:480.5px;top:298px;width:55.5px;height:11.7px;border:1px solid #efeff3;border-radius:2px"></div>
<div class="t" style="left:483.7px;top:301.65000000000003px;font-size:5.3px;color:#2b2d4f;-webkit-text-stroke:0.15px #2b2d4f">Product Revenue</div>
<svg class="abs" style="left:527px;top:302px" width="5" height="4"><polyline points="0.9,1 2.5,2.6 4.1,1" fill="none" stroke="#2b2d4f" stroke-width="0.8"/></svg>
<div class="abs" style="left:539.8px;top:298px;width:57.90000000000009px;height:11.7px;border:1px solid #efeff3;border-radius:2px"></div>
<div class="t" style="left:543.0px;top:301.8px;font-size:5.0px;color:#2b2d4f;-webkit-text-stroke:0.15px #2b2d4f">Business Unit 1.1A</div>
<svg class="abs" style="left:588.7px;top:302px" width="5" height="4"><polyline points="0.9,1 2.5,2.6 4.1,1" fill="none" stroke="#2b2d4f" stroke-width="0.8"/></svg>
<svg class="abs" style="left:603.6px;top:301.1px" width="7" height="7"><path d="M0.7,0.7 L5.2,5.2 M5.2,0.7 L0.7,5.2" stroke="#33354c" stroke-width="0.8"/></svg>
<svg class="abs" style="left:578px;top:315.5px" width="38" height="11"><g fill="none" stroke="#3b3e66" stroke-width="0.85">
<path d="M3.4,2.4 H6 L7.6,4 V6.4 M6.0,8.2 H3.4 V2.4"/><path d="M6.6,7.6 L7.9,8.9" stroke="#5a5cf0"/>
<path d="M20.4,3.2 A2.4,2.4 0 1 0 20.9,6.6 L19.2,8.4 L18.6,7.4"/><circle cx="21.3" cy="3.1" r="0.9" fill="#5a5cf0" stroke="none"/>
<path d="M29,8.2 L30.4,6.8 M29,8.2 V6.9 M29,8.2 H30.3 M33,3.4 L31.6,4.8 M33,3.4 H31.7 M33,3.4 V4.7" stroke-width="0.75"/>
</g></svg>
<div class="abs" style="left:22.4px;top:349.9px;width:4.6px;height:4.6px;border-radius:50%;background:#d8d7e0"></div>
<div class="t" style="left:29.6px;top:349.9px;font-size:5.1px;letter-spacing:0.2px;color:#2e3048;-webkit-text-stroke:0.2px #2e3048">Historical Amount</div>
<div class="abs" style="left:22.4px;top:358.84999999999997px;width:4.6px;height:4.6px;border-radius:50%;background:#5f6170"></div>
<div class="t" style="left:29.6px;top:358.84999999999997px;font-size:5.1px;letter-spacing:0.2px;color:#2e3048;-webkit-text-stroke:0.2px #2e3048">Actual</div>
<div class="abs" style="left:22.4px;top:367.79999999999995px;width:4.6px;height:4.6px;border-radius:50%;background:#9194f8"></div>
<div class="t" style="left:29.6px;top:367.79999999999995px;font-size:5.1px;letter-spacing:0.2px;color:#2e3048;-webkit-text-stroke:0.2px #2e3048">Forecast</div>
<svg class="abs" style="left:21px;top:376.05px" width="8" height="6"><line x1="0.5" y1="3" x2="7.5" y2="3" stroke="#b3b1f3" stroke-width="0.8"/><circle cx="4" cy="3" r="1.2" fill="#b3b1f3"/></svg>
<div class="t" style="left:29.6px;top:376.75px;font-size:5.1px;letter-spacing:0.2px;color:#2e3048;-webkit-text-stroke:0.2px #2e3048">Version Amount</div>
<svg class="abs" style="left:0;top:0" width="760" height="428">
<line x1="92.5" y1="335.59" x2="611" y2="335.59" stroke="#ececf0" stroke-width="0.6"/>
<line x1="92.5" y1="352.06" x2="611" y2="352.06" stroke="#ececf0" stroke-width="0.6"/>
<line x1="92.5" y1="368.53" x2="611" y2="368.53" stroke="#ececf0" stroke-width="0.6"/>
<line x1="92.5" y1="385.00" x2="611" y2="385.00" stroke="#ececf0" stroke-width="0.6"/>
<polygon points="103.90,353.01 114.05,353.01 157.23,354.11 200.41,354.01 243.59,355.96 286.77,356.31 329.95,352.56 373.13,356.67 416.31,357.31 459.49,354.24 502.67,354.17 545.85,359.85 589.03,354.84 599.18,354.84 599.18,385.0 103.90,385.0" fill="#dcdbe5"/>
<rect x="103.90" y="351.98" width="20.3" height="33.02" fill="#9194f8"/>
<line x1="103.60" y1="351.98" x2="103.60" y2="385.0" stroke="#f4f4f8" stroke-width="0.6"/><line x1="124.50" y1="351.98" x2="124.50" y2="385.0" stroke="#f4f4f8" stroke-width="0.6"/>
<rect x="147.08" y="353.11" width="20.3" height="31.89" fill="#9194f8"/>
<line x1="146.78" y1="353.11" x2="146.78" y2="385.0" stroke="#f4f4f8" stroke-width="0.6"/><line x1="167.68" y1="353.11" x2="167.68" y2="385.0" stroke="#f4f4f8" stroke-width="0.6"/>
<rect x="190.26" y="352.99" width="20.3" height="32.01" fill="#9194f8"/>
<line x1="189.96" y1="352.99" x2="189.96" y2="385.0" stroke="#f4f4f8" stroke-width="0.6"/><line x1="210.86" y1="352.99" x2="210.86" y2="385.0" stroke="#f4f4f8" stroke-width="0.6"/>
<rect x="233.44" y="355.07" width="20.3" height="29.93" fill="#9194f8"/>
<line x1="233.14" y1="355.07" x2="233.14" y2="385.0" stroke="#f4f4f8" stroke-width="0.6"/><line x1="254.04" y1="355.07" x2="254.04" y2="385.0" stroke="#f4f4f8" stroke-width="0.6"/>
<rect x="276.62" y="355.42" width="20.3" height="29.58" fill="#9194f8"/>
<line x1="276.32" y1="355.42" x2="276.32" y2="385.0" stroke="#f4f4f8" stroke-width="0.6"/><line x1="297.22" y1="355.42" x2="297.22" y2="385.0" stroke="#f4f4f8" stroke-width="0.6"/>
<rect x="319.80" y="351.52" width="20.3" height="33.48" fill="#9194f8"/>
<line x1="319.50" y1="351.52" x2="319.50" y2="385.0" stroke="#f4f4f8" stroke-width="0.6"/><line x1="340.40" y1="351.52" x2="340.40" y2="385.0" stroke="#f4f4f8" stroke-width="0.6"/>
<rect x="362.98" y="355.76" width="20.3" height="29.24" fill="#9194f8"/>
<line x1="362.68" y1="355.76" x2="362.68" y2="385.0" stroke="#f4f4f8" stroke-width="0.6"/><line x1="383.58" y1="355.76" x2="383.58" y2="385.0" stroke="#f4f4f8" stroke-width="0.6"/>
<rect x="406.16" y="356.44" width="20.3" height="28.56" fill="#9194f8"/>
<line x1="405.86" y1="356.44" x2="405.86" y2="385.0" stroke="#f4f4f8" stroke-width="0.6"/><line x1="426.76" y1="356.44" x2="426.76" y2="385.0" stroke="#f4f4f8" stroke-width="0.6"/>
<rect x="449.34" y="353.22" width="20.3" height="31.78" fill="#9194f8"/>
<line x1="449.04" y1="353.22" x2="449.04" y2="385.0" stroke="#f4f4f8" stroke-width="0.6"/><line x1="469.94" y1="353.22" x2="469.94" y2="385.0" stroke="#f4f4f8" stroke-width="0.6"/>
<rect x="492.52" y="353.18" width="20.3" height="31.82" fill="#9194f8"/>
<line x1="492.22" y1="353.18" x2="492.22" y2="385.0" stroke="#f4f4f8" stroke-width="0.6"/><line x1="513.12" y1="353.18" x2="513.12" y2="385.0" stroke="#f4f4f8" stroke-width="0.6"/>
<rect x="535.70" y="359.05" width="20.3" height="25.95" fill="#9194f8"/>
<line x1="535.40" y1="359.05" x2="535.40" y2="385.0" stroke="#f4f4f8" stroke-width="0.6"/><line x1="556.30" y1="359.05" x2="556.30" y2="385.0" stroke="#f4f4f8" stroke-width="0.6"/>
<rect x="578.88" y="353.90" width="20.3" height="31.10" fill="#9194f8"/>
<line x1="578.58" y1="353.90" x2="578.58" y2="385.0" stroke="#f4f4f8" stroke-width="0.6"/><line x1="599.48" y1="353.90" x2="599.48" y2="385.0" stroke="#f4f4f8" stroke-width="0.6"/>
<polyline points="103.90,353.01 114.05,353.01 157.23,354.11 200.41,354.01 243.59,355.96 286.77,356.31 329.95,352.56 373.13,356.67 416.31,357.31 459.49,354.24 502.67,354.17 545.85,359.85 589.03,354.84 599.18,354.84" fill="none" stroke="#b8b6f4" stroke-width="0.9"/>
<circle cx="114.05" cy="353.01" r="1" fill="#c9c8f6"/>
<circle cx="157.23" cy="354.11" r="1" fill="#c9c8f6"/>
<circle cx="200.41" cy="354.01" r="1" fill="#c9c8f6"/>
<circle cx="243.59" cy="355.96" r="1" fill="#c9c8f6"/>
<circle cx="286.77" cy="356.31" r="1" fill="#c9c8f6"/>
<circle cx="329.95" cy="352.56" r="1" fill="#c9c8f6"/>
<circle cx="373.13" cy="356.67" r="1" fill="#c9c8f6"/>
<circle cx="416.31" cy="357.31" r="1" fill="#c9c8f6"/>
<circle cx="459.49" cy="354.24" r="1" fill="#c9c8f6"/>
<circle cx="502.67" cy="354.17" r="1" fill="#c9c8f6"/>
<circle cx="545.85" cy="359.85" r="1" fill="#c9c8f6"/>
<circle cx="589.03" cy="354.84" r="1" fill="#c9c8f6"/>
</svg>
<div class="t" style="left:70px;width:17.2px;text-align:right;top:334.79px;font-size:3.8px;color:#3e404e;-webkit-text-stroke:0.22px #3e404e">75K</div>
<div class="t" style="left:70px;width:17.2px;text-align:right;top:351.26px;font-size:3.8px;color:#3e404e;-webkit-text-stroke:0.22px #3e404e">50K</div>
<div class="t" style="left:70px;width:17.2px;text-align:right;top:367.73px;font-size:3.8px;color:#3e404e;-webkit-text-stroke:0.22px #3e404e">25K</div>
<div class="t" style="left:70px;width:17.2px;text-align:right;top:384.20px;font-size:3.8px;color:#3e404e;-webkit-text-stroke:0.22px #3e404e">0</div>
<div class="t" style="left:99.05px;width:30px;text-align:center;top:346.91px;font-size:4.7px;font-weight:bold;color:#22243a">48,554</div>
<div class="t" style="left:99.05px;width:30px;text-align:center;top:366.89px;font-size:4.5px;letter-spacing:0.15px;font-weight:bold;color:#34343e;text-shadow:0 0 0.6px rgba(255,255,255,0.8)">50,125</div>
<div class="t" style="left:99.05px;width:30px;text-align:center;top:388.50px;font-size:4.5px;color:#5d5f70">Jan 23</div>
<div class="t" style="left:142.23px;width:30px;text-align:center;top:348.01px;font-size:4.7px;font-weight:bold;color:#22243a">46,888</div>
<div class="t" style="left:142.23px;width:30px;text-align:center;top:367.46px;font-size:4.5px;letter-spacing:0.15px;font-weight:bold;color:#34343e;text-shadow:0 0 0.6px rgba(255,255,255,0.8)">48,401</div>
<div class="t" style="left:142.23px;width:30px;text-align:center;top:388.50px;font-size:4.5px;color:#5d5f70">Feb 23</div>
<div class="t" style="left:185.41px;width:30px;text-align:center;top:347.91px;font-size:4.7px;font-weight:bold;color:#22243a">47,043</div>
<div class="t" style="left:185.41px;width:30px;text-align:center;top:367.39px;font-size:4.5px;letter-spacing:0.15px;font-weight:bold;color:#34343e;text-shadow:0 0 0.6px rgba(255,255,255,0.8)">48,592</div>
<div class="t" style="left:185.41px;width:30px;text-align:center;top:388.50px;font-size:4.5px;color:#5d5f70">Mar 23</div>
<div class="t" style="left:228.59px;width:30px;text-align:center;top:349.86px;font-size:4.7px;font-weight:bold;color:#22243a">44,075</div>
<div class="t" style="left:228.59px;width:30px;text-align:center;top:368.43px;font-size:4.5px;letter-spacing:0.15px;font-weight:bold;color:#34343e;text-shadow:0 0 0.6px rgba(255,255,255,0.8)">45,434</div>
<div class="t" style="left:228.59px;width:30px;text-align:center;top:388.50px;font-size:4.5px;color:#5d5f70">Apr 23</div>
<div class="t" style="left:271.77px;width:30px;text-align:center;top:350.21px;font-size:4.7px;font-weight:bold;color:#22243a">43,547</div>
<div class="t" style="left:271.77px;width:30px;text-align:center;top:368.61px;font-size:4.5px;letter-spacing:0.15px;font-weight:bold;color:#34343e;text-shadow:0 0 0.6px rgba(255,255,255,0.8)">44,899</div>
<div class="t" style="left:271.77px;width:30px;text-align:center;top:388.50px;font-size:4.5px;color:#5d5f70">May 23</div>
<div class="t" style="left:314.95px;width:30px;text-align:center;top:346.46px;font-size:4.7px;font-weight:bold;color:#22243a">49,238</div>
<div class="t" style="left:314.95px;width:30px;text-align:center;top:366.66px;font-size:4.5px;letter-spacing:0.15px;font-weight:bold;color:#34343e;text-shadow:0 0 0.6px rgba(255,255,255,0.8)">50,816</div>
<div class="t" style="left:314.95px;width:30px;text-align:center;top:388.50px;font-size:4.5px;color:#5d5f70">Jun 23</div>
<div class="t" style="left:358.13px;width:30px;text-align:center;top:350.57px;font-size:4.7px;font-weight:bold;color:#22243a">43,005</div>
<div class="t" style="left:358.13px;width:30px;text-align:center;top:368.78px;font-size:4.5px;letter-spacing:0.15px;font-weight:bold;color:#34343e;text-shadow:0 0 0.6px rgba(255,255,255,0.8)">44,380</div>
<div class="t" style="left:358.13px;width:30px;text-align:center;top:388.50px;font-size:4.5px;color:#5d5f70">Jul 23</div>
<div class="t" style="left:401.31px;width:30px;text-align:center;top:351.21px;font-size:4.7px;font-weight:bold;color:#22243a">42,034</div>
<div class="t" style="left:401.31px;width:30px;text-align:center;top:369.12px;font-size:4.5px;letter-spacing:0.15px;font-weight:bold;color:#34343e;text-shadow:0 0 0.6px rgba(255,255,255,0.8)">43,347</div>
<div class="t" style="left:401.31px;width:30px;text-align:center;top:388.50px;font-size:4.5px;color:#5d5f70">Aug 23</div>
<div class="t" style="left:444.49px;width:30px;text-align:center;top:348.14px;font-size:4.7px;font-weight:bold;color:#22243a">46,698</div>
<div class="t" style="left:444.49px;width:30px;text-align:center;top:367.51px;font-size:4.5px;letter-spacing:0.15px;font-weight:bold;color:#34343e;text-shadow:0 0 0.6px rgba(255,255,255,0.8)">48,233</div>
<div class="t" style="left:444.49px;width:30px;text-align:center;top:388.50px;font-size:4.5px;color:#5d5f70">Sep 23</div>
<div class="t" style="left:487.67px;width:30px;text-align:center;top:348.07px;font-size:4.7px;font-weight:bold;color:#22243a">46,793</div>
<div class="t" style="left:487.67px;width:30px;text-align:center;top:367.49px;font-size:4.5px;letter-spacing:0.15px;font-weight:bold;color:#34343e;text-shadow:0 0 0.6px rgba(255,255,255,0.8)">48,296</div>
<div class="t" style="left:487.67px;width:30px;text-align:center;top:388.50px;font-size:4.5px;color:#5d5f70">Oct 23</div>
<div class="t" style="left:530.85px;width:30px;text-align:center;top:353.75px;font-size:4.7px;font-weight:bold;color:#22243a">38,182</div>
<div class="t" style="left:530.85px;width:30px;text-align:center;top:370.43px;font-size:4.5px;letter-spacing:0.15px;font-weight:bold;color:#34343e;text-shadow:0 0 0.6px rgba(255,255,255,0.8)">39,388</div>
<div class="t" style="left:530.85px;width:30px;text-align:center;top:388.50px;font-size:4.5px;color:#5d5f70">Nov 23</div>
<div class="t" style="left:574.03px;width:30px;text-align:center;top:348.74px;font-size:4.7px;font-weight:bold;color:#22243a">45,775</div>
<div class="t" style="left:574.03px;width:30px;text-align:center;top:367.85px;font-size:4.5px;letter-spacing:0.15px;font-weight:bold;color:#34343e;text-shadow:0 0 0.6px rgba(255,255,255,0.8)">47,209</div>
<div class="t" style="left:574.03px;width:30px;text-align:center;top:388.50px;font-size:4.5px;color:#5d5f70">Dec 23</div>
<div class="abs" style="left:7.2px;top:395.3px;width:742.8px;height:40px;background:#f6f6f6"></div>
<div class="hl" style="left:7.2px;top:395.3px;width:742.8px;background:#efeff1"></div>
<div class="t" style="left:624px;top:38.9px;font-size:7.0px;color:#24263d;-webkit-text-stroke:0.2px #24263d">Additional Insights</div>
<svg class="abs" style="left:734px;top:42px" width="9" height="9"><path d="M0.9,0.9 L6.9,6.9 M6.9,0.9 L0.9,6.9" stroke="#33354c" stroke-width="1.0"/></svg>
<div class="hl" style="left:616px;top:54.3px;width:134px"></div>
<div class="vl" style="left:748.2px;top:28.5px;height:367px;background:#f3f3f5"></div>
<div class="abs" style="left:622.5px;top:60.8px;width:121.5px;height:39.2px;background:#fff;border-radius:3px;box-shadow:0 0.6px 1.6px rgba(40,40,80,0.075)"></div>
<div class="t" style="left:628.5px;top:66.1px;font-size:4.6px;font-weight:bold;color:#2b2d4f">Scale</div>
<div class="abs" style="left:628.3px;top:73.7px;width:110px;height:15.899999999999991px;border:0.9px solid #b4b4c0;border-radius:2.2px"></div>
<div class="t" style="left:635.4px;top:80.05px;font-size:4.85px;color:#62646f">Thousands</div>
<svg class="abs" style="left:718px;top:78.95px" width="6" height="6"><path d="M1,1 L4.6,4.6 M4.6,1 L1,4.6" stroke="#2b2d4f" stroke-width="0.85"/></svg>
<svg class="abs" style="left:727.3px;top:79.65px" width="6" height="4"><polyline points="0.6,0.7 2.7,2.8 4.8,0.7" fill="none" stroke="#2b2d4f" stroke-width="0.85"/></svg>
<div class="abs" style="left:622.5px;top:105px;width:121.5px;height:40.400000000000006px;background:#fff;border-radius:3px;box-shadow:0 0.6px 1.6px rgba(40,40,80,0.075)"></div>
<svg class="abs" style="left:627.9000000000001px;top:109.5px" width="8" height="8"><path d="M0.7,0.5 V6.4 H6.9" fill="none" stroke="#3a3c5c" stroke-width="0.8"/><polyline points="2,5 3.3,3.2 4.4,4.3 6.2,2.1" fill="none" stroke="#3a3c5c" stroke-width="0.7"/></svg>
<div class="t" style="left:637.4px;top:110.1px;font-size:6.1px;color:#2b2d4f;-webkit-text-stroke:0.2px #2b2d4f;letter-spacing:0.03px">Selected Forecast</div>
<div class="abs" style="left:628.4px;top:127.6px;width:12.4px;height:12.4px;border-radius:50%;background:#23a043"></div>
<div class="t" style="left:644px;top:131px;font-size:6.45px;font-weight:bold;color:#24263d">Jan 23 Forecast</div>
<div class="abs" style="left:622.5px;top:151.9px;width:121.5px;height:40.099999999999994px;background:#fff;border-radius:3px;box-shadow:0 0.6px 1.6px rgba(40,40,80,0.075)"></div>
<svg class="abs" style="left:627.9000000000001px;top:155.89999999999998px" width="8" height="8"><path d="M0.7,0.5 V6.4 H6.9" fill="none" stroke="#3a3c5c" stroke-width="0.8"/><polyline points="2,5 3.3,3.2 4.4,4.3 6.2,2.1" fill="none" stroke="#3a3c5c" stroke-width="0.7"/></svg>
<div class="t" style="left:637.4px;top:156.4px;font-size:6.1px;color:#2b2d4f;-webkit-text-stroke:0.2px #2b2d4f;letter-spacing:0.03px">Reporting Currency</div>
<div class="abs" style="left:628.4px;top:173.2px;width:12.4px;height:12.4px;border-radius:50%;background:#6f7386"></div>
<div class="t" style="left:644px;top:176.9px;font-size:6.45px;font-weight:bold;color:#24263d">USD - US Dollar ($)</div>
<div class="abs" style="left:622.5px;top:198px;width:121.5px;height:15.400000000000006px;background:#fff;border-radius:3px;box-shadow:0 0.6px 1.6px rgba(40,40,80,0.075)"></div>
<svg class="abs" style="left:627.8px;top:201.8px" width="8" height="8"><path d="M0.7,0.5 V6.4 H6.9" fill="none" stroke="#3a3c5c" stroke-width="0.8"/><path d="M2.5,5.6 V3.4 M4.0,5.6 V2.2 M5.5,5.6 V4" stroke="#3a3c5c" stroke-width="0.75"/></svg>
<svg class="abs" style="left:638.6px;top:203.7px" width="7" height="5"><g fill="#2b2d4f"><polygon points="0.4,0.4 2.3,1.9 0.4,3.4"/><polygon points="3.0,0.4 4.9,1.9 3.0,3.4"/></g></svg>
<div class="t" style="left:645.7px;top:203px;font-size:5.75px;font-weight:bold;color:#24263d">Data Visualization</div>
<div class="abs" style="left:622.5px;top:219.5px;width:121.5px;height:72.5px;background:#fff;border-radius:3px;box-shadow:0 0.6px 1.6px rgba(40,40,80,0.075)"></div>
<svg class="abs" style="left:628.5px;top:223.5px" width="5" height="5"><polygon points="0.6,0.9 4.0,0.9 2.3,3.9" fill="#2b2d4f"/></svg><div class="t" style="left:635.2px;top:224.4px;font-size:5.0px;font-weight:bold;color:#2b2d4f">Compare Version</div><svg class="abs" style="left:678.2px;top:223.5px" width="5" height="5"><polygon points="0.6,0.9 4.0,0.9 2.3,3.9" fill="#2b2d4f"/></svg>
<div class="abs" style="left:628.3px;top:232.3px;width:110px;height:15.0px;border:0.9px solid #b4b4c0;border-radius:2.2px"></div>
<div class="t" style="left:635.4px;top:238.20px;font-size:4.85px;color:#62646f">Mar 23 Forecast</div>
<svg class="abs" style="left:718px;top:237.10px" width="6" height="6"><path d="M1,1 L4.6,4.6 M4.6,1 L1,4.6" stroke="#2b2d4f" stroke-width="0.85"/></svg>
<svg class="abs" style="left:727.3px;top:237.80px" width="6" height="4"><polyline points="0.6,0.7 2.7,2.8 4.8,0.7" fill="none" stroke="#2b2d4f" stroke-width="0.85"/></svg>
<svg class="abs" style="left:628.5px;top:254.6px" width="5" height="5"><polygon points="0.8,1.0 3.9,1.0 2.35,3.8" fill="none" stroke="#2b2d4f" stroke-width="0.6"/></svg><div class="t" style="left:635.2px;top:255px;font-size:5.0px;font-weight:bold;color:#2b2d4f">Compare Historical</div><svg class="abs" style="left:682.6px;top:254.6px" width="5" height="5"><polygon points="0.8,1.0 3.9,1.0 2.35,3.8" fill="none" stroke="#2b2d4f" stroke-width="0.6"/></svg>
<div class="abs" style="left:628.3px;top:262.5px;width:110px;height:16px;border:0.9px solid #b4b4c0;border-radius:2.2px"></div>
<div class="t" style="left:632.2px;top:269.2px;font-size:4.75px;color:#6a6c80">12 months</div></div></body></html>
